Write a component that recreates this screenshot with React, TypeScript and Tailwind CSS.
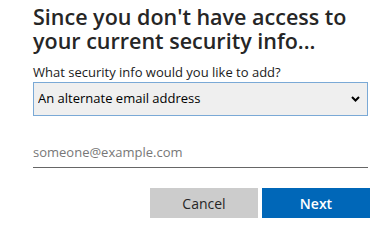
import React from 'react';

const App: React.FC = () => {
  return (
    <div className="w-[390px] h-[233px] bg-white font-['Open_Sans',sans-serif] text-[#1b1b1b] pl-[33px] pr-[20px] pt-[5px]">
      <h1 className="text-[21.5px] leading-[24px] font-semibold text-[#262626]">
        Since you don't have access to your current security info...
      </h1>
      <label className="block mt-[11px] text-[13px] leading-[16px] text-[#1b1b1b]">What security info would you like to add?</label>
      <div className="relative mt-[2px] w-[335px]">
        <select className="appearance-none block w-full h-[34px] px-[4px] bg-[#efefef] border border-[#7aa9d6] text-[13px] text-black outline-none">
          <option>An alternate email address</option>
        </select>
        <svg className="absolute right-[8px] top-[14px] pointer-events-none" width="9" height="6" viewBox="0 0 9 6">
          <path d="M1 1l3.5 3.5L8 1" fill="none" stroke="#000" strokeWidth="2" />
        </svg>
      </div>
      <input
        className="block mt-[20px] w-[335px] h-[32px] border-b border-[#666] text-[13px] placeholder:text-[#777] outline-none"
        placeholder="someone@example.com"
      />
      <div className="flex justify-end gap-[4px] mt-[20px] w-[337px]">
        <button className="w-[108px] h-[30px] bg-[#cccccc] text-[14px] text-[#262626]">Cancel</button>
        <button className="w-[108px] h-[30px] bg-[#0067b8] text-[14px] font-semibold text-white">Next</button>
      </div>
    </div>
  );
};

export default App;
